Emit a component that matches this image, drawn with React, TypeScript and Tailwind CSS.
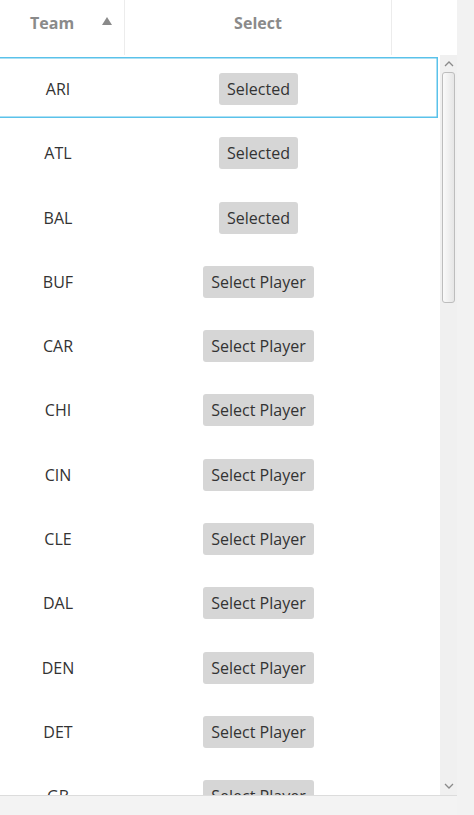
import React from "react";

const teams = ["ARI", "ATL", "BAL", "BUF", "CAR", "CHI", "CIN", "CLE", "DAL", "DEN", "DET", "GB"];
const selected = new Set(["ARI", "ATL", "BAL"]);

function Chevron({ up }: { up?: boolean }) {
    return (
        <svg width="10" height="6" viewBox="0 0 10 6" className="block">
            <path
                d={up ? "M1 5 L5 1 L9 5" : "M1 1 L5 5 L9 1"}
                fill="none"
                stroke="#8a8a8a"
                strokeWidth="1.3"
            />
        </svg>
    );
}

export default function App() {
    return (
        <div
            className="flex h-[815px] w-[474px] overflow-hidden bg-white text-[#333]"
            style={{ fontFamily: '"Open Sans", "Noto Sans", sans-serif' }}
        >
            <div className="flex w-[457px] flex-col">
                {/* Header */}
                <div className="flex h-[55px] shrink-0">
                    <div className="relative flex w-[125px] items-center border-r border-[#ececec] pb-[10px] pl-[30px] text-[16px] font-bold text-[#8a8a8a]">
                        Team
                        <span className="absolute left-[102px] top-[17px] h-0 w-0 border-x-[5px] border-b-[8px] border-x-transparent border-b-[#8a8a8a]" />
                    </div>
                    <div className="flex w-[267px] items-center justify-center border-r border-[#ececec] pb-[10px] text-[16px] font-bold text-[#8a8a8a]">
                        Select
                    </div>
                    <div className="flex-1" />
                </div>

                {/* Body */}
                <div className="flex min-h-0 flex-1">
                    <div className="min-w-0 flex-1 overflow-hidden pt-[2px]">
                        {teams.map((t, i) => (
                            <div key={t} className="relative flex h-[64.27px] shrink-0 items-center">
                                {i === 0 && (
                                    <span className="pointer-events-none absolute left-[-2px] right-[2px] top-0 h-[61px] shadow-[inset_0_0_0_1.5px_#5ac2ea]" />
                                )}
                                <div className="w-[125px] pr-[9px] text-center text-[16px]">{t}</div>
                                <div className="flex w-[267px] justify-center">
                                    <button className="h-[32px] rounded-[3px] bg-[#d6d6d6] px-[8px] text-[16px] text-[#333]">
                                        {selected.has(t) ? "Selected" : "Select Player"}
                                    </button>
                                </div>
                            </div>
                        ))}
                    </div>

                    {/* Vertical scrollbar */}
                    <div className="flex w-[17px] shrink-0 flex-col items-center bg-[#f0f0f0]">
                        <div className="flex h-[16px] items-center justify-center pt-[2px]">
                            <Chevron up />
                        </div>
                        <div className="mt-[1px] h-[231px] w-[13px] rounded-[3px] border border-[#bdbdbd] bg-gradient-to-r from-[#fafafa] to-[#e6e6e6]" />
                        <div className="flex-1" />
                        <div className="flex h-[16px] items-center justify-center pb-[2px]">
                            <Chevron />
                        </div>
                    </div>
                </div>

                {/* Horizontal scrollbar area */}
                <div className="h-[20px] shrink-0 border-t border-[#dcdcdc] bg-[#f3f3f3]" />
            </div>
            <div className="flex-1 bg-[#f2f2f2]" />
        </div>
    );
}
